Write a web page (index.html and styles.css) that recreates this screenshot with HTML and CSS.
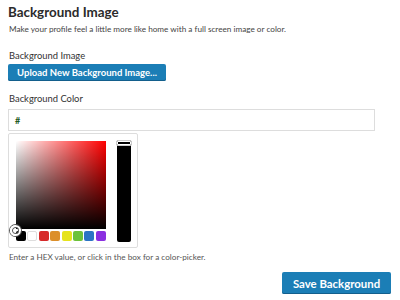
FILE: index.html
```html
<!DOCTYPE html>
<html>
<head>
<meta charset="utf-8">
<link rel="stylesheet" href="styles.css">
</head>
<body>
<div class="page">
  <h1 class="title">Background Image</h1>
  <p class="desc">Make your profile feel a little more like home with a full screen image or color.</p>
  <div class="label label-first">Background Image</div>
  <button class="btn btn-upload">Upload New Background Image...</button>
  <div class="label label-color">Background Color</div>
  <div class="input">#</div>
  <div class="picker">
    <div class="left">
      <div class="grad">
        <div class="grad-white"></div>
        <div class="grad-black"></div>
      </div>
      <div class="swatches">
        <span class="sw" style="background:#000"></span>
        <span class="sw sw-white" style="background:#fff"></span>
        <span class="sw" style="background:#d62a2a"></span>
        <span class="sw" style="background:#dc8f2a"></span>
        <span class="sw" style="background:#e6e31c"></span>
        <span class="sw" style="background:#6cc23a"></span>
        <span class="sw" style="background:#2b74c4"></span>
        <span class="sw" style="background:#8a2fe0"></span>
      </div>
      <div class="cursor"></div>
    </div>
    <div class="hue">
      <div class="hue-handle"></div>
    </div>
  </div>
  <p class="hint">Enter a HEX value, or click in the box for a color-picker.</p>
  <div class="actions">
    <button class="btn btn-save">Save Background</button>
  </div>
</div>
</body>
</html>
```
FILE: styles.css
```css
* { box-sizing: border-box; }
html, body { margin: 0; padding: 0; background: #fff; }
body { font-family: "Lato", "Open Sans", "Liberation Sans", sans-serif; color: #333; }
.page { width: 400px; height: 300px; padding: 3px 9px 0 8px; overflow: hidden; }
.title { margin: 0; font-family: "Lato", "Open Sans", sans-serif; font-weight: 700; font-size: 13.4px; line-height: 18px; color: #2b2b2b; }
.desc { margin: 2px 0 0 1px; font-size: 8.2px; line-height: 12px; color: #444; }
.label { font-size: 9.4px; line-height: 12px; color: #333; margin-left: 1px; }
.label-first { margin-top: 15px; }
.label-color { margin-top: 12px; }
.btn { display: block; border: 0; border-radius: 2px; background: #1b7eb6; color: #fff; font-family: "Lato", "Open Sans", sans-serif; cursor: pointer; box-shadow: inset 0 -1px 0 #135f8c; }
.btn-upload { margin-top: 2px; width: 158px; height: 17px; padding: 0; font-size: 9.5px; font-weight: 700; }
.input { margin-top: 4px; width: 367px; height: 22px; border: 1px solid #ddd; padding: 3px 0 0 6px; font-size: 9px; font-weight: 700; color: #1d5a1d; line-height: 15px; }
.picker { position: relative; margin-top: 2px; width: 130px; height: 115px; border: 1px solid #ddd; border-radius: 2px; display: flex; padding: 7px 0 0 7px; gap: 11px; }
.left { position: relative; width: 90px; }
.grad { position: relative; width: 90px; height: 88px; background: #ff0000; }
.grad-white { position: absolute; inset: 0; background: linear-gradient(to right, #fff, rgba(255,255,255,0)); }
.grad-black { position: absolute; inset: 0; background: linear-gradient(to bottom, rgba(0,0,0,0), #000); }
.swatches { display: flex; gap: 1.4px; margin-top: 2px; }
.sw { display: block; width: 10px; height: 10px; border-radius: 2px; }
.sw-white { border: 1px solid #ddd; }
.cursor { position: absolute; left: -6px; top: 84px; width: 11px; height: 11px; border-radius: 50%; border: 2px solid #fff; box-shadow: 0 0 0 1px #555, inset 0 0 0 1px #555; }
.hue { position: relative; width: 14px; height: 102px; margin-top: -1px; background: #000; border-radius: 2px; }
.hue-handle { position: absolute; left: -1px; top: 0; width: 16px; height: 6px; border: 1px solid #ccc; background: #000; border-radius: 2px; box-shadow: 0 0 0 1px #fff inset; }
.hint { margin: 3px 0 0 1px; font-size: 8.2px; line-height: 12px; color: #555; }
.actions { display: flex; justify-content: flex-end; margin-top: 9px; padding-right: 0; }
.btn-save { width: 109px; height: 22px; font-size: 11.4px; font-weight: 700; }
```
